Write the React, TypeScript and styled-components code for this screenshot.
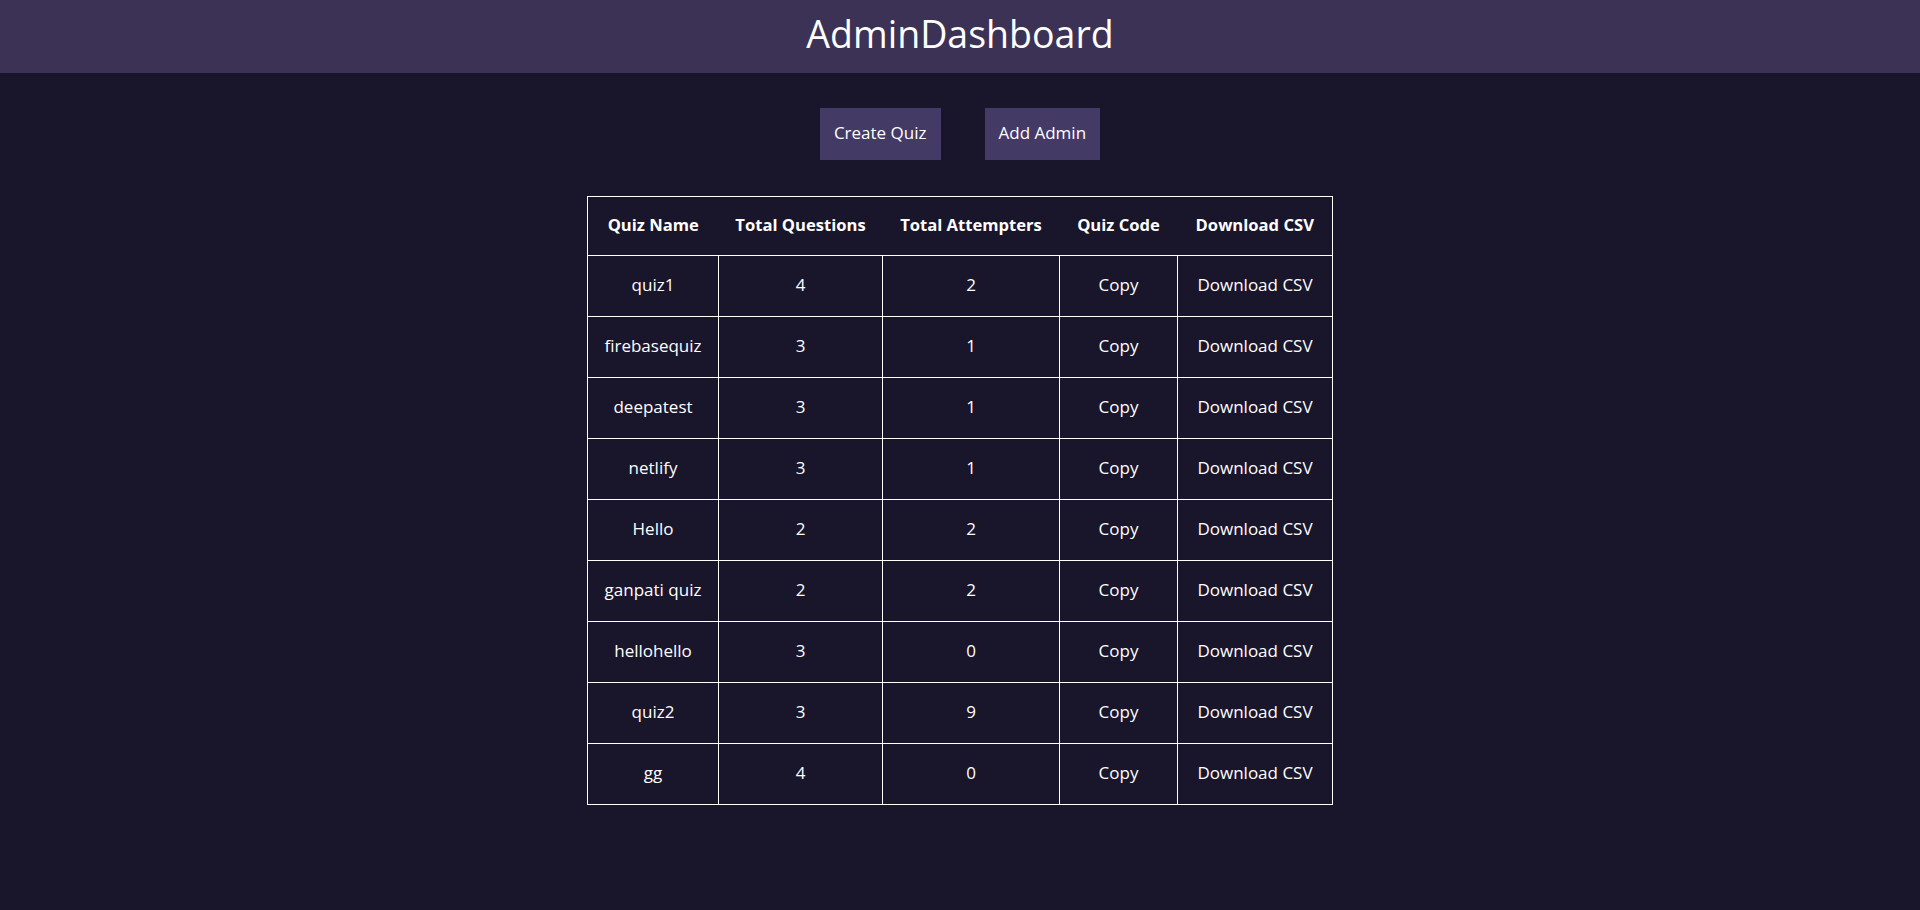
import React from 'react';
import styled, { createGlobalStyle } from 'styled-components';

const GlobalStyle = createGlobalStyle`
  * {
    box-sizing: border-box;
  }

  html, body {
    margin: 0;
    padding: 0;
    background-color: #19152b;
    color: #ffffff;
    font-family: 'Open Sans', 'Noto Sans', 'Liberation Sans', sans-serif;
  }
`;

const Page = styled.div`
  min-height: 910px;
  background-color: #19152b;
`;

const Header = styled.header`
  height: 73px;
  padding-bottom: 7px;
  background-color: #3c3255;
  display: flex;
  align-items: center;
  justify-content: center;
`;

const Title = styled.h1`
  margin: 0;
  font-size: 37.5px;
  font-weight: 400;
  color: #ffffff;
`;

const Actions = styled.div`
  display: flex;
  justify-content: center;
  gap: 44px;
  margin-top: 35px;
`;

const ActionButton = styled.button`
  height: 52px;
  padding: 0 14px 4px;
  border: none;
  background-color: #433a66;
  color: #ffffff;
  font-family: inherit;
  font-size: 17px;
  cursor: pointer;
`;

const TableWrap = styled.div`
  display: flex;
  justify-content: center;
  margin-top: 36px;
`;

const Table = styled.table`
  width: 745px;
  table-layout: fixed;
  border-collapse: collapse;
  border: 1px solid #ffffff;
`;

const HeadCell = styled.th`
  height: 59px;
  padding: 0 6px 4px;
  font-size: 16.6px;
  font-weight: 700;
  text-align: center;
  border-bottom: 1px solid #ffffff;
  white-space: nowrap;
`;

const Cell = styled.td`
  height: 61px;
  padding: 0 6px 4px;
  font-size: 17px;
  text-align: center;
  border: 1px solid #ffffff;
  white-space: nowrap;
`;

const LinkText = styled.span`
  cursor: pointer;
`;

interface Quiz {
  name: string;
  questions: number;
  attempters: number;
}

const columns = [
  { title: 'Quiz Name', width: 131 },
  { title: 'Total Questions', width: 164 },
  { title: 'Total Attempters', width: 177 },
  { title: 'Quiz Code', width: 118 },
  { title: 'Download CSV', width: 155 },
];

const quizzes: Quiz[] = [
  { name: 'quiz1', questions: 4, attempters: 2 },
  { name: 'firebasequiz', questions: 3, attempters: 1 },
  { name: 'deepatest', questions: 3, attempters: 1 },
  { name: 'netlify', questions: 3, attempters: 1 },
  { name: 'Hello', questions: 2, attempters: 2 },
  { name: 'ganpati quiz', questions: 2, attempters: 2 },
  { name: 'hellohello', questions: 3, attempters: 0 },
  { name: 'quiz2', questions: 3, attempters: 9 },
  { name: 'gg', questions: 4, attempters: 0 },
];

const App: React.FC = () => {
  return (
    <Page>
      <GlobalStyle />
      <Header>
        <Title>AdminDashboard</Title>
      </Header>

      <Actions>
        <ActionButton>Create Quiz</ActionButton>
        <ActionButton>Add Admin</ActionButton>
      </Actions>

      <TableWrap>
        <Table>
          <colgroup>
            {columns.map((col) => (
              <col key={col.title} style={{ width: col.width }} />
            ))}
          </colgroup>
          <thead>
            <tr>
              {columns.map((col) => (
                <HeadCell key={col.title}>{col.title}</HeadCell>
              ))}
            </tr>
          </thead>
          <tbody>
            {quizzes.map((quiz) => (
              <tr key={quiz.name}>
                <Cell>{quiz.name}</Cell>
                <Cell>{quiz.questions}</Cell>
                <Cell>{quiz.attempters}</Cell>
                <Cell>
                  <LinkText>Copy</LinkText>
                </Cell>
                <Cell>
                  <LinkText>Download CSV</LinkText>
                </Cell>
              </tr>
            ))}
          </tbody>
        </Table>
      </TableWrap>
    </Page>
  );
};

export default App;
